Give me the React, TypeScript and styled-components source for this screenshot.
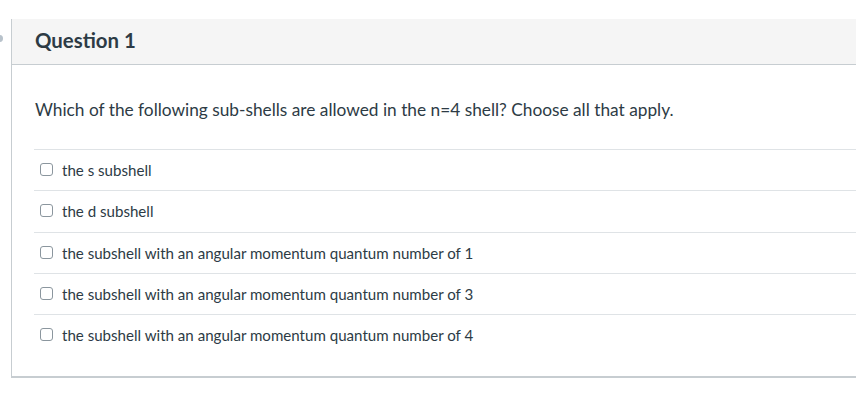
import { FC } from "react";
import styled, { createGlobalStyle } from "styled-components";

const GlobalStyle = createGlobalStyle`
  html, body {
    margin: 0;
    padding: 0;
    background: #fff;
    overflow: hidden;
  }
  body {
    font-family: Lato, "Noto Sans", "Liberation Sans", sans-serif;
    color: #2d3b45;
  }
`;

const Page = styled.div`
  position: relative;
  width: 856px;
  height: 402px;
  padding: 19px 0 0 11px;
  box-sizing: border-box;
`;

const EdgeDot = styled.span`
  position: absolute;
  left: -4px;
  top: 35px;
  width: 7px;
  height: 7px;
  border-radius: 50%;
  background: #b8c2cb;
`;

const Card = styled.div`
  border-left: 1px solid #c7cdd1;
  border-bottom: 2px solid #c7cdd1;
  background: #fff;
`;

const Header = styled.div`
  height: 45px;
  display: flex;
  align-items: center;
  padding-left: 23px;
  background: #f5f5f5;
  border-bottom: 1px solid #c7cdd1;

  h2 {
    margin: 0 0 3px;
    font-size: 20.4px;
    line-height: 24px;
    font-weight: 700;
    color: #2d3b45;
  }
`;

const Body = styled.div`
  padding: 35px 0 21px 22px;
`;

const Prompt = styled.p`
  margin: 0 0 29px 1px;
  font-size: 17.3px;
  line-height: 20px;
  white-space: nowrap;
`;

const Options = styled.ul`
  list-style: none;
  margin: 0;
  padding: 0;
`;

const Option = styled.li`
  display: flex;
  align-items: center;
  gap: 9px;
  height: 40.25px;
  padding-left: 6px;
  border-top: 1px solid #dfe3e6;
  font-size: 15.1px;
`;

const Box = styled.span`
  width: 11px;
  height: 11px;
  margin-top: -1px;
  border: 1px solid #8b969e;
  border-radius: 3px;
  background: #fff;
  flex-shrink: 0;
`;

const options = [
  "the s subshell",
  "the d subshell",
  "the subshell with an angular momentum quantum number of 1",
  "the subshell with an angular momentum quantum number of 3",
  "the subshell with an angular momentum quantum number of 4",
];

const App: FC = () => (
  <>
    <GlobalStyle />
    <Page>
      <EdgeDot />
      <Card>
        <Header>
          <h2>Question 1</h2>
        </Header>
        <Body>
          <Prompt>
            Which of the following sub-shells are allowed in the n=4 shell? Choose all that apply.
          </Prompt>
          <Options>
            {options.map((text) => (
              <Option key={text}>
                <Box />
                <span>{text}</span>
              </Option>
            ))}
          </Options>
        </Body>
      </Card>
    </Page>
  </>
);

export default App;
